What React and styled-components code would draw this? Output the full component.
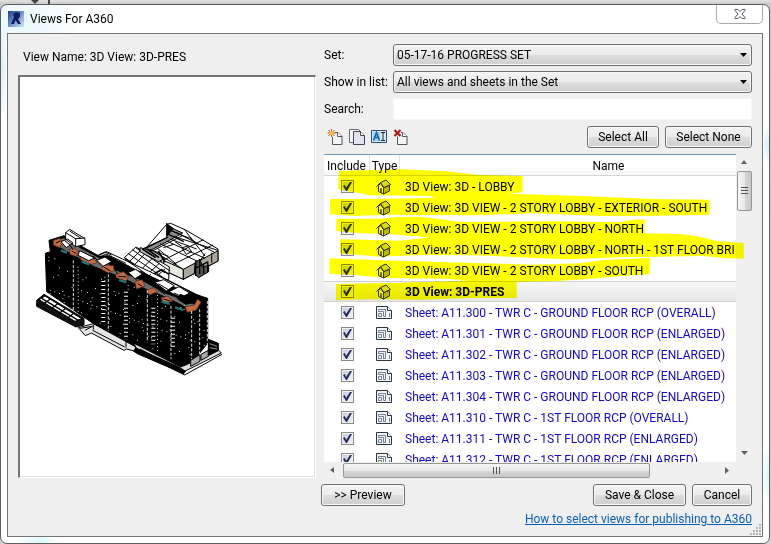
import React, { useState } from 'react';
import styled, { createGlobalStyle, css } from 'styled-components';

const GlobalStyle = createGlobalStyle`
  * { box-sizing: border-box; }
  html, body { margin: 0; }
  body {
    background: #dcdcdc;
    color: #000;
    font: 12px/16px Roboto, "Open Sans", sans-serif;
  }
  button, input, select { font: inherit; color: inherit; margin: 0; }
`;

const Desktop = styled.div`
  display: flex;
  flex-direction: column;
  height: 100vh;
  min-height: 360px;
  padding-right: 1px;
  background: linear-gradient(#e4e4e4, #c8c8c8 4px, #d4d4d4);
`;

const Backdrop = styled.div`
  flex: none;
  height: 4px;
  padding-left: 30px;
  svg { display: block; }
`;

const Dialog = styled.main`
  flex: 1;
  min-height: 0;
  display: flex;
  flex-direction: column;
  border: 1px solid #5e5e5e;
  border-radius: 7px;
  background:
    radial-gradient(ellipse 60px 40px at 22px 16px, #e6f7fa, transparent),
    radial-gradient(ellipse 8px 60px at 0 60px, #d8ecfa, transparent),
    radial-gradient(ellipse 20px 10px at 38px 100%, #d5f8fa, transparent),
    radial-gradient(ellipse 8px 20px at 100% 140px, #d3eef8, transparent),
    radial-gradient(ellipse 8px 30px at 100% 470px, #d5f8fa, transparent),
    #fff;
`;

const TitleBar = styled.header`
  flex: none;
  display: flex;
  height: 28px;
  padding: 0 6px 0 7px;
`;

const Title = styled.h1`
  flex: 1;
  margin: 0;
  padding-left: 6px;
  font-size: 12px;
  font-weight: 400;
  line-height: 28px;
`;

const AppIcon = styled.svg`
  width: 16px;
  height: 16px;
  margin-top: 6px;
`;

const CloseButton = styled.button`
  display: grid;
  place-items: center;
  width: 47px;
  height: 19px;
  padding: 0;
  border: 1px solid #a9a9a9;
  border-top: 0;
  border-radius: 0 0 5px 5px;
  background: #fff;
`;

const Client = styled.div`
  flex: 1;
  min-height: 0;
  display: flex;
  flex-direction: column;
  margin: 0 6px 6px;
  padding: 0 10px 0;
  border: 1px solid #747474;
  background: #efefef;
`;

const Columns = styled.div`
  flex: 1;
  min-height: 0;
  display: grid;
  grid-template-columns: minmax(0, 298fr) minmax(0, 431fr);
  column-gap: 5px;
`;

const PreviewPane = styled.section`
  display: flex;
  flex-direction: column;
  min-height: 0;
`;

const ViewName = styled.p`
  margin: 0;
  padding: 15px 5px 10px;
`;

const Viewport = styled.div`
  flex: 1;
  min-height: 0;
  border: 1px solid #fff;
  border-top: 2px solid #747474;
  border-left: 2px solid #747474;
  background: #fff;
  box-shadow: inset -1px -1px #dedede;
  svg { display: block; width: 100%; height: 100%; }
`;

const Controls = styled.section`
  display: flex;
  flex-direction: column;
  min-height: 0;
  padding: 10px 0 0 3px;
`;

const Fields = styled.div`
  display: grid;
  grid-template-columns: 69px minmax(0, 1fr);
  gap: 5px 0;
  align-items: center;
`;

const SelectBox = styled.div`
  position: relative;
  svg { position: absolute; right: 5px; top: 9px; pointer-events: none; }
`;

const raised = css`
  border: 1px solid #707070;
  border-radius: 3px;
  background: linear-gradient(#f3f3f3, #ebebeb 50%, #dddddd 51%, #cfcfcf);
  box-shadow: inset 0 0 0 1px #f8f8f8;
`;

const Select = styled.select`
  ${raised}
  display: block;
  appearance: none;
  width: 100%;
  height: 22px;
  padding: 0 18px 0 3px;
`;

const SearchInput = styled.input`
  width: 100%;
  height: 22px;
  padding: 0 4px;
  border: 1px solid #f6f6f6;
  background: #fff;
`;

const Toolbar = styled.div`
  flex: none;
  display: flex;
  align-items: center;
  padding: 6px 0;
`;

const ToolButton = styled.button`
  width: 22px;
  height: 22px;
  padding: 0;
  border: 0;
  background: transparent;
  svg { display: block; }
`;

const PushButton = styled.button`
  ${raised}
  width: ${p => p.$width};
  height: 22px;
  padding: 0;
  white-space: nowrap;
`;

const ButtonGroup = styled.div`
  display: flex;
  gap: 6px;
  margin-left: auto;
`;

const ListArea = styled.div`
  position: relative;
  flex: 1;
  min-height: 0;
  display: grid;
  grid-template-columns: minmax(0, 1fr) 16px;
  grid-template-rows: minmax(0, 1fr) 16px;
`;

const ListView = styled.div`
  overflow: hidden;
  border-top: 1px solid #6f9dbd;
  background: #fff;
`;

const Table = styled.table`
  width: 494px;
  table-layout: fixed;
  border-collapse: separate;
  border-spacing: 0;
`;

const HeadCell = styled.th`
  width: ${p => p.$width};
  height: 21px;
  padding: 1px 0 0;
  border-right: 1px solid #e2e3e5;
  border-bottom: 1px solid #d5d5d5;
  background: linear-gradient(#fff 50%, #f7f8fa);
  font-weight: 400;
  text-align: center;
`;

const Row = styled.tr`
  color: ${p => (p.$sheet ? '#1208c4' : '#000')};
  font-weight: ${p => (p.$current ? 700 : 400)};
  background: ${p => (p.$current ? 'linear-gradient(#f8f8f8, #e5e5e5)' : 'none')};
  td {
    border: solid #d0d0d0;
    border-width: ${p => (p.$current ? '1px 0' : '0')};
  }
`;

const Cell = styled.td`
  height: 21px;
  padding: 0 0 0 ${p => p.$indent};
  white-space: nowrap;
  svg, label { display: block; }
`;

const Check = styled.input`
  appearance: none;
  display: block;
  width: 13px;
  height: 13px;
  border: 1px solid #8a8a8a;
  background: linear-gradient(135deg, #c3c9d6, #f5f6fa);
  box-shadow: inset 0 0 0 1px #f1f1f1;
  &:checked::before {
    content: '';
    display: block;
    width: 11px;
    height: 11px;
    background: #262b5c;
    clip-path: polygon(1px 5px, 3px 4px, 4px 7px, 8px 1px, 10px 1px, 5px 10px, 4px 10px);
  }
`;

const VerticalBar = styled.div`
  display: flex;
  flex-direction: column;
  align-items: center;
  padding: 6px 0 7px;
  background: #f0f0f0;
`;

const HorizontalBar = styled.div`
  display: flex;
  align-items: center;
  padding: 0 7px 0 6px;
  background: #f0f0f0;
`;

const Arrow = styled.svg`
  flex: none;
  fill: #606060;
`;

const Thumb = styled.div`
  display: grid;
  place-items: center;
  border: 1px solid #979797;
  border-radius: 2px;
  ${p => p.$vertical
    ? css`width: 15px; height: 40px; margin: 7px 0 auto; background: linear-gradient(90deg, #f5f5f5, #e8e8e8 50%, #d6d6d6 51%, #c8c8c8);`
    : css`width: 77%; height: 15px; margin: 0 auto 0 9px; background: linear-gradient(#f5f5f5, #e8e8e8 50%, #d6d6d6 51%, #c8c8c8);`}
`;

const Highlights = styled.svg`
  position: absolute;
  left: 0;
  top: 0;
  pointer-events: none;
  mix-blend-mode: multiply;
  fill: #ff0;
`;

const Footer = styled.footer`
  flex: none;
  display: grid;
  grid-template-columns: minmax(0, 298fr) minmax(0, 431fr);
  column-gap: 5px;
  padding: 6px 0 9px;
`;

const FooterContent = styled.div`
  grid-column: 2;
  display: grid;
  gap: 5px;
`;

const FooterButtons = styled.div`
  display: flex;
`;

const HelpLink = styled.a`
  justify-self: end;
  color: #0b5fb8;
  white-space: nowrap;
`;

const Grip = styled.svg`
  position: fixed;
  right: 9px;
  bottom: 8px;
  fill: #b4b4b4;
`;

const TOOLS = [
  {
    label: 'New set',
    art: (
      <>
        <path d="M11 6.500h3l4 4v8H8.500V11" fill="#f2f5f8" stroke="#555" />
        <path d="M13.500 6.500v4H18" fill="#fff" stroke="#555" />
        <path d="M7.500 3v8M3.500 7h8M4.500 4l6 6M10.500 4l-6 6" stroke="#d9480f" />
        <circle cx="7.500" cy="7" r="2" fill="#ffc23d" />
      </>
    ),
  },
  {
    label: 'Duplicate',
    art: (
      <>
        <path d="M3.500 3.500h9l2 2v11h-11z" fill="#f4f6f8" stroke="#667" />
        <path d="M7.500 5.500h7l4 4v9h-11z" fill="#e2e6ec" stroke="#445" />
        <path d="M14.500 5.500v4h4" fill="#fff" stroke="#445" />
      </>
    ),
  },
  {
    label: 'Rename',
    art: (
      <>
        <path d="M3.500 4.500h15v12h-15z" fill="#d5ebf8" stroke="#334b63" />
        <path d="M5 6h7v9H5z" fill="#9ccdf0" />
        <path d="M5.500 14.500l3-8 3 8M6.500 11.500h4" fill="none" stroke="#1565b5" strokeWidth="1.600" />
        <path d="M13 6.500h4M13 14.500h4M15 6.500v8" stroke="#223" />
      </>
    ),
  },
  {
    label: 'Delete',
    art: (
      <>
        <path d="M11 6.500h2l4 4v8H7.500v-8" fill="#f2f5f8" stroke="#555" />
        <path d="M12.500 6.500v4H17" fill="#fff" stroke="#555" />
        <path d="M4.500 4l6 6M10.500 4l-6 6" stroke="#b01818" strokeWidth="2.200" />
      </>
    ),
  },
];

const HouseIcon = () => (
  <svg width="16" height="16" viewBox="0 0 16 16" stroke="#33332a" strokeLinejoin="round">
    <path d="M2.500 6.500v6l5 2.500V8.500l-3-4z" fill="#fbfbf8" />
    <path d="M7.500 8.500V15l6-3V6.500z" fill="#b9b9ae" />
    <path d="M4.500 3.500L10 1l4.500 4.500-6.500 3z" fill="#dcdcd4" />
    <path d="M.5 7.500l4-4" fill="none" />
    <path d="M4.500 13.500v-4h1v4.500" fill="#555" strokeWidth=".5" />
  </svg>
);

const SheetIcon = () => (
  <svg width="16" height="14" viewBox="0 0 16 14" fill="none" stroke="#2d3440">
    <path d="M.5.500h11l4 4v8H.5z" fill="#f2f4f7" />
    <path d="M11.500.500v4h4" fill="#fff" />
    <path d="M2.500 3.500h7v7h-2v-5h-5zM2.500 7.500h3v3h-3z" stroke="#738092" />
    <path d="M13.500 7v4" stroke="#738092" />
  </svg>
);

const dots = [];
for (let i = 0; i < 34; i += 1) {
  for (let j = 0; j < 16; j += 1) {
    const n = (i * 37 + j * 53 + i * j * 11) % 17;
    if (n < 4) dots.push([70 + i * 14 + (n % 2) * 4, 137 + i * 5 + j * 11]);
  }
}

const Building = () => (
  <svg viewBox="0 0 295 400" preserveAspectRatio="xMidYMid meet" role="img" aria-label="3D view of building">
    <g transform="translate(5 134) scale(.333333)" stroke="#000" strokeWidth="3">
      {/* annex roof */}
      <path d="M425 40l12-3 45 20 97 57v36l-104 55-60-28-8-32-50-27z" fill="#fff" />
      <path d="M425 37v43l-68 32 12 10 68-36 36-20-40-18z" fill="#8b8b8b" />
      <path d="M427 40v34l18-22z" />
      <path d="M430 55l60 26M425 68l52 24M360 112l70-34" fill="none" strokeWidth="4" />
      <path d="M415 148l60 27v30l-60-28z" fill="#e8e8e2" />
      <path d="M475 175l104-56v31l-104 55z" fill="#aaa69c" />
      <path d="M475 175l-92-56M445 76l134 42M405 98l115 54M425 90l115 52M382 120l90-46M415 148l120-62M445 160l118-58M455 65l112 58M480 58l60 77M395 110l60 50M435 84l80 30M375 116l56 20" fill="none" />
      <path d="M510 155l15-10 8 25 18-8v20l-30 18-13-12z" fill="#555" />
      <path d="M512 150v45M524 145v44M536 160v28M548 156v26M510 172l40-20" strokeWidth="4" />
      <path d="M415 110l30-10M450 92l20 14M490 78l24 18M540 128l-14 20M560 125v30M470 110l14 20 16-8-12-16z" fill="none" />
      {/* podium roofs */}
      <path d="M298 140l35-32 100 60-2 38-28 8z" fill="#fff" />
      <path d="M298 140l105 68M310 128l102 70M322 116l98 70M332 110l103 70M315 150l30-30M330 160l30-32M350 174l32-32M370 188l34-32M390 200l30-26" fill="none" />
      <path d="M345 110l40 10 35 22-20 10-55-30z" fill="#bbb" />
      <path d="M352 114l40 26M366 114l36 26M400 120l20 34M384 190l26-14 22 14" fill="none" strokeWidth="5" />
      {/* rear parapet */}
      <path d="M165 104l55 30 25-12 130 60 170 85v20L160 130z" fill="#fff" />
      <path d="M168 114l50 28 25-13 60 28M252 136l60 30M300 145l90 62M395 190l150 76M345 180l190 96" fill="none" />
      {/* tower */}
      <path d="M72 88l45-14 45 28 60 34 25-2 105 52 100 44 96 32v134l-72 92-139-60L65 242l-4-115 15-5z" fill="#000" />
      <path d="M92 86l25-6 52 32 70 36 32 28 80 32 70 38 80 30 22 10-38 4-60-30-64-26-70-34-82-32-76-42-46-26z" fill="#6c6c6c" />
      <g fill="#c56a43" stroke="#4b271a" strokeWidth="2">
        <path d="M85 88l20-6 8 14-10 14-18-8zM132 116l15-6 14 16-9 10-17-6zM165 138l38 1 14 16-18 5-32-14zM228 174l8-12 30 2 2 14-18 8zM272 190l24-8 14 16-6 12-30-10zM330 212l22-6 8 20-26 8zM365 238l20-8 12 12-24 10zM408 260l20-4 16 14-28 8zM480 288l28-6 10-18 10 10-15 24-26 6z" />
      </g>
      <path d="M92 96l14-6M140 120l14 8M236 168l20 12M280 196l24 2M338 218l14 8M416 264l20 6M130 96l14 20M204 134l24 26M266 170l12 20M316 190l20 18M400 236l20 14" />
      <path d="M108 118l18 7M170 152l23 8M282 207l22 7M410 271l24 8M450 289l25 8" stroke="#26747b" strokeWidth="7" />
      <g fill="#fff">
        <path d="M122 65l12-10 46 28v18l-28 6-30-22zM108 92l20-8 16 12-20 14zM164 119l45 22-18 8-32-16zM215 148l25-10 20 14-26 14zM310 184l22-9 20 14-22 14zM390 214l26-8 32 18-24 16zM432 242l30-15 32 19-26 14z" />
        <path d="M122 65l30 18v24M152 83l28-2M220 132l20-9 20 9M360 203l18-13M400 218l30 18M447 246l25 12M134 60l34 22M120 90l16 12" fill="none" />
      </g>
      <path d="M465 250l35 12 10 12-28 6-24-16z" />
      <g stroke="none" fill="#ddd">
        {dots.map(([x, y]) => <path key={`${x}-${y}`} d={`M${x} ${y}h3v3h-3z`} />)}
      </g>
      <g stroke="#ddd" fill="none" strokeDasharray="9 5">
        <path d="M145 148v152M250 190v170M367 238v150M438 285v160M500 300v145M524 295v140M547 270v130" />
      </g>
      <g stroke="#fff" fill="none" strokeWidth="12" strokeDasharray="3 9">
        <path d="M235 210v130M303 242v145M385 290v110M444 320v90" />
      </g>
      {/* base */}
      <path d="M35 268l22-18 120 72 0 20-24 6L35 286z" fill="#111" />
      <path d="M42 266l18-11 110 68-20 8z" fill="#fff" />
      <path d="M56 278l20-14M80 292l18-14M103 307l18-14M128 321l18-14M38 266v18M50 262l110 66" fill="none" strokeWidth="4" />
      <path d="M160 350l45-12 128 70-6 12-22-6-8 4-98-52-18 8z" fill="#e5e5e5" />
      <path d="M203 358l96 50M205 340v16M303 378v32M165 352l38-6M180 358l22-12" fill="none" />
      <path d="M335 412l122 54 24 14 108-54-12-12-90 46-20 8-142-72z" fill="#ddd" />
      <path d="M335 420l144 72 112-62M345 414l130 68" fill="none" />
      <path d="M497 448l28-17v20l-28 15zM528 430l22-12v18l-22 12z" fill="#aaa" />
      <path d="M550 385l30 12v22l-30 15z" />
      <path d="M554 398l22 8M554 410l22 4" stroke="#999" />
    </g>
  </svg>
);

const VIEWS = [
  '3D View: 3D - LOBBY',
  '3D View: 3D VIEW - 2 STORY LOBBY - EXTERIOR - SOUTH',
  '3D View: 3D VIEW - 2 STORY LOBBY - NORTH',
  '3D View: 3D VIEW - 2 STORY LOBBY - NORTH - 1ST FLOOR BRI',
  '3D View: 3D VIEW - 2 STORY LOBBY - SOUTH',
  '3D View: 3D-PRES',
  'Sheet: A11.300 - TWR C - GROUND FLOOR RCP (OVERALL)',
  'Sheet: A11.301 - TWR C - GROUND FLOOR RCP (ENLARGED)',
  'Sheet: A11.302 - TWR C - GROUND FLOOR RCP (ENLARGED)',
  'Sheet: A11.303 - TWR C - GROUND FLOOR RCP (ENLARGED)',
  'Sheet: A11.304 - TWR C - GROUND FLOOR RCP (ENLARGED)',
  'Sheet: A11.310 - TWR C - 1ST FLOOR RCP (OVERALL)',
  'Sheet: A11.311 - TWR C - 1ST FLOOR RCP (ENLARGED)',
  'Sheet: A11.312 - TWR C - 1ST FLOOR RCP (ENLARGED)',
];

const DropArrow = () => <svg width="7" height="4"><path d="M0 0h7L3.500 4z" /></svg>;

export default function App() {
  const [checked, setChecked] = useState(() => VIEWS.map(() => true));
  const toggle = i => setChecked(list => list.map((v, n) => (n === i ? !v : v)));
  const setAll = value => setChecked(VIEWS.map(() => value));

  return (
    <Desktop>
      <GlobalStyle />
      <Backdrop>
        <svg width="24" height="4"><path d="M1 0h8L5 4zM18 0h2v4h-2z" fill="#444" /></svg>
      </Backdrop>
      <Dialog>
        <TitleBar>
          <AppIcon viewBox="0 0 16 16">
            <defs>
              <linearGradient id="tile" x2="1" y2="1">
                <stop stopColor="#1d3f80" />
                <stop offset=".5" stopColor="#6d93c9" />
                <stop offset="1" stopColor="#dce7f5" />
              </linearGradient>
            </defs>
            <path d="M0 0h16v16H0z" fill="url(#tile)" />
            <path d="M5 3l3-2 4 1v4L10 8l3 5h-3L7.500 9 6 13H3l3-7z" fill="#0b1c63" />
          </AppIcon>
          <Title>Views For A360</Title>
          <CloseButton aria-label="Close">
            <svg width="12" height="10" viewBox="0 0 12 10">
              <path d="M1 .5h3l2 2 2-2h3v1L8 5l3 3.500v1H8l-2-2-2 2H1v-1L4 5 1 1.500z" fill="#fff" stroke="#556" />
            </svg>
          </CloseButton>
        </TitleBar>
        <Client>
          <Columns>
            <PreviewPane>
              <ViewName>View Name: 3D View: 3D-PRES</ViewName>
              <Viewport><Building /></Viewport>
            </PreviewPane>
            <Controls>
              <Fields>
                <label htmlFor="set">Set:</label>
                <SelectBox>
                  <Select id="set"><option>05-17-16 PROGRESS SET</option></Select>
                  <DropArrow />
                </SelectBox>
                <label htmlFor="show">Show in list:</label>
                <SelectBox>
                  <Select id="show"><option>All views and sheets in the Set</option></Select>
                  <DropArrow />
                </SelectBox>
                <label htmlFor="search">Search:</label>
                <SearchInput id="search" type="text" />
              </Fields>
              <Toolbar>
                {TOOLS.map(tool => (
                  <ToolButton key={tool.label} aria-label={tool.label}>
                    <svg width="22" height="22">{tool.art}</svg>
                  </ToolButton>
                ))}
                <ButtonGroup>
                  <PushButton $width="72px" onClick={() => setAll(true)}>Select All</PushButton>
                  <PushButton $width="87px" onClick={() => setAll(false)}>Select None</PushButton>
                </ButtonGroup>
              </Toolbar>
              <ListArea>
                <ListView>
                  <Table>
                    <thead>
                      <tr>
                        <HeadCell $width="46px">Include</HeadCell>
                        <HeadCell $width="30px">Type</HeadCell>
                        <HeadCell $width="418px">Name</HeadCell>
                      </tr>
                    </thead>
                    <tbody>
                      {VIEWS.map((name, i) => {
                        const sheet = name.startsWith('Sheet');
                        return (
                          <Row key={name} $sheet={sheet} $current={i === 5}>
                            <Cell $indent="17px">
                              <Check id={`view-${i}`} type="checkbox" checked={checked[i]} onChange={() => toggle(i)} />
                            </Cell>
                            <Cell $indent="6px">{sheet ? <SheetIcon /> : <HouseIcon />}</Cell>
                            <Cell $indent="5px"><label htmlFor={`view-${i}`}>{name}</label></Cell>
                          </Row>
                        );
                      })}
                    </tbody>
                  </Table>
                </ListView>
                <VerticalBar>
                  <Arrow width="6" height="4"><path d="M0 4h6L3 0z" /></Arrow>
                  <Thumb $vertical>
                    <svg width="7" height="8"><path d="M0 .5h7M0 3.500h7M0 6.500h7" stroke="#555" /></svg>
                  </Thumb>
                  <Arrow width="7" height="4"><path d="M0 0h7L3.500 4z" /></Arrow>
                </VerticalBar>
                <HorizontalBar>
                  <Arrow width="4" height="6"><path d="M4 0v6L0 3z" /></Arrow>
                  <Thumb>
                    <svg width="8" height="7"><path d="M.5 0v7M3.500 0v7M6.500 0v7" stroke="#555" /></svg>
                  </Thumb>
                  <Arrow width="4" height="7"><path d="M0 0v7l4-3.500z" /></Arrow>
                </HorizontalBar>
                <Highlights width="422" height="150" viewBox="12 12 1266 450">
                  <path d="M57 63L240 58L380 64L470 74L608 78V127L560 131L780 138L1000 147L1168 149V194L1000 197L850 198L640 190L460 196L200 194L100 198L30 193V147L200 146L345 143L330 138L150 136L54 118z" />
                  <path d="M50 206L180 206L235 201L300 200L350 206L420 216L700 214L900 217L935 210L974 208V250L1080 252L1140 260L1190 273L1271 279V326L1220 325L1150 318L900 322L740 328L470 316L300 315L180 320L60 310V268L240 272L330 262L200 252L120 250L48 243z" />
                  <path d="M340 240H900V300H480L330 262z" />
                  <path d="M29 325L160 330L350 336L640 344L780 340L850 330L989 324V372L880 380L790 388L700 394L590 396V444L450 444L300 449L150 448L48 450V402L240 398L440 392L380 386L200 384L110 376L28 371z" />
                </Highlights>
              </ListArea>
            </Controls>
          </Columns>
          <Footer>
            <FooterContent>
              <FooterButtons>
                <PushButton $width="84px">&gt;&gt; Preview</PushButton>
                <ButtonGroup>
                  <PushButton $width="93px">Save &amp; Close</PushButton>
                  <PushButton $width="60px">Cancel</PushButton>
                </ButtonGroup>
              </FooterButtons>
              <HelpLink href="#help">How to select views for publishing to A360</HelpLink>
            </FooterContent>
          </Footer>
        </Client>
      </Dialog>
      <Grip width="12" height="12">
        <path d="M9 0h2v2H9zM6 3h2v2H6zM9 3h2v2H9zM3 6h2v2H3zM6 6h2v2H6zM9 6h2v2H9zM0 9h2v2H0zM3 9h2v2H3zM6 9h2v2H6zM9 9h2v2H9z" />
      </Grip>
    </Desktop>
  );
}
